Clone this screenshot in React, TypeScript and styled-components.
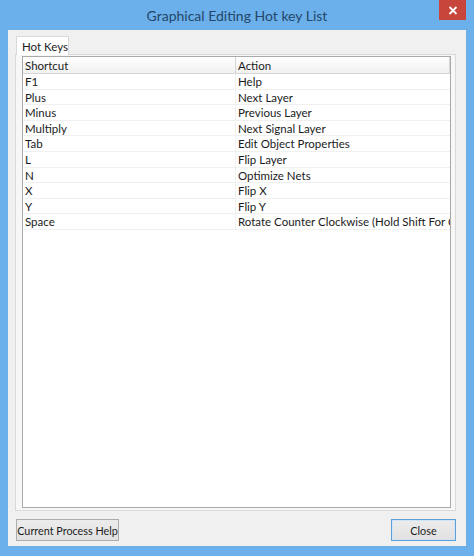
import styled, { createGlobalStyle } from "styled-components";

const rows: [string, string][] = [
  ["F1", "Help"],
  ["Plus", "Next Layer"],
  ["Minus", "Previous Layer"],
  ["Multiply", "Next Signal Layer"],
  ["Tab", "Edit Object Properties"],
  ["L", "Flip Layer"],
  ["N", "Optimize Nets"],
  ["X", "Flip X"],
  ["Y", "Flip Y"],
  ["Space", "Rotate Counter Clockwise (Hold Shift For Clockwise)"],
];

export default function App() {
  return (
    <>
      <GlobalStyle />
      <Frame>
        <TitleBar>
          <Title>Graphical Editing Hot key List</Title>
          <CloseX>
            <svg width="10" height="9" viewBox="0 0 10 9">
              <path d="M1.5 1 L8.5 8 M8.5 1 L1.5 8" stroke="#fff" strokeWidth="1.8" />
            </svg>
          </CloseX>
        </TitleBar>
        <Client>
          <Tabs>
            <Tab>Hot Keys</Tab>
          </Tabs>
          <Panel>
            <List>
              <HeaderRow>
                <HeadCell>Shortcut</HeadCell>
                <HeadCell>Action</HeadCell>
              </HeaderRow>
              {rows.map(([k, a]) => (
                <Row key={k}>
                  <Cell>{k}</Cell>
                  <Cell $last>{a}</Cell>
                </Row>
              ))}
            </List>
          </Panel>
          <Footer>
            <Button $w={103}>Current Process Help</Button>
            <Button $primary $w={65}>
              Close
            </Button>
          </Footer>
        </Client>
      </Frame>
    </>
  );
}

const GlobalStyle = createGlobalStyle`
  body {
    margin: 0;
    font-family: Lato, "Noto Sans", sans-serif;
  }
`;

const Frame = styled.div`
  width: 474px;
  height: 556px;
  background: #6bb0ea;
  display: flex;
  flex-direction: column;
  padding: 0 8px 10px;
  box-sizing: border-box;
`;

const TitleBar = styled.div`
  height: 30px;
  position: relative;
  display: flex;
  align-items: center;
  justify-content: center;
`;

const Title = styled.div`
  font-family: Lato, sans-serif;
  font-size: 14px;
  color: #24476b;
`;

const CloseX = styled.div`
  position: absolute;
  right: 0;
  top: 0;
  width: 27px;
  height: 20px;
  background: #c7453b;
  display: flex;
  align-items: center;
  justify-content: center;
`;

const Client = styled.div`
  flex: 1;
  background: #f0f0f0;
  display: flex;
  flex-direction: column;
  padding: 6px 10px 5px 7px;
  font-size: 11.5px;
  color: #1b1b1b;
`;

const Tabs = styled.div`
  display: flex;
  padding-left: 1px;
`;

const Tab = styled.div`
  width: 53px;
  height: 19px;
  box-sizing: border-box;
  background: #fff;
  border: 1px solid #d9d9d9;
  border-bottom: none;
  padding: 3px 0 0 5px;
  margin-bottom: -1px;
  position: relative;
  z-index: 1;
`;

const Panel = styled.div`
  height: 457px;
  box-sizing: border-box;
  border: 1px solid #d9d9d9;
  background: #f7f7f7;
  padding: 1px 4px 2px 6px;
`;

const List = styled.div`
  height: 100%;
  box-sizing: border-box;
  border: 1px solid #a9a9a9;
  background: #fff;
  overflow: hidden;
`;

const HeaderRow = styled.div`
  display: grid;
  grid-template-columns: 213px 1fr;
  height: 16px;
  background: linear-gradient(#ffffff, #f1f1f1);
  border-bottom: 1px solid #d5d5d5;
`;

const HeadCell = styled.div`
  padding-left: 2px;
  line-height: 17px;
  border-right: 1px solid #d5d5d5;
  white-space: nowrap;
`;

const Row = styled.div`
  display: grid;
  grid-template-columns: 213px 1fr;
  height: 15.6px;
  box-sizing: border-box;
  border-bottom: 1px solid #f0f0f0;
`;

const Cell = styled.div<{ $last?: boolean }>`
  padding-left: 2px;
  line-height: 16px;
  white-space: nowrap;
  overflow: hidden;
  border-right: ${(p) => (p.$last ? "none" : "1px solid #f0f0f0")};
`;

const Footer = styled.div`
  display: flex;
  justify-content: space-between;
  align-items: flex-end;
  padding: 8px 0 0 1px;
`;

const Button = styled.button<{ $primary?: boolean; $w?: number }>`
  height: 22px;
  width: ${(p) => (p.$w ? `${p.$w}px` : "auto")};
  padding: 0;
  white-space: nowrap;
  font-family: Lato, sans-serif;
  font-size: 10.8px;
  color: #1b1b1b;
  background: linear-gradient(#ececec, #e1e1e1);
  border: 1px solid ${(p) => (p.$primary ? "#5f9fd4" : "#adadad")};
  box-shadow: ${(p) => (p.$primary ? "inset 0 0 0 1px #cfe4f6" : "none")};
`;
